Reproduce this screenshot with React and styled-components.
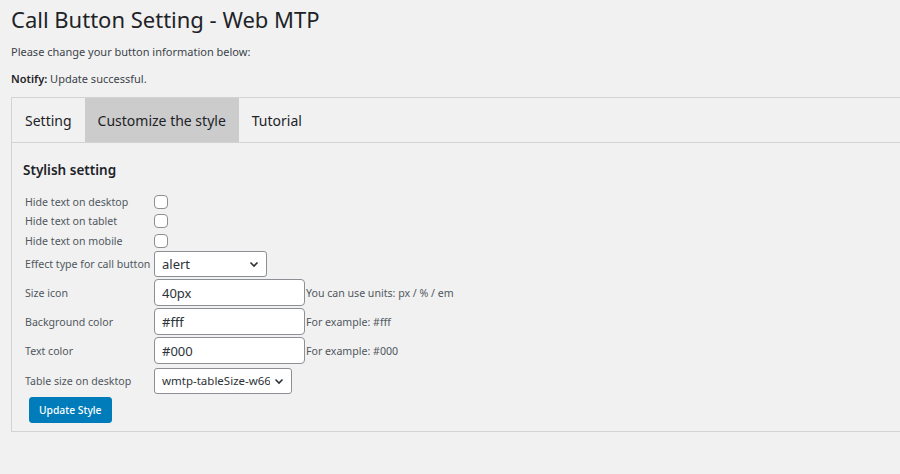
import React, { useState } from 'react';
import styled, { createGlobalStyle } from 'styled-components';

const GlobalStyle = createGlobalStyle`
  html, body {
    margin: 0;
    padding: 0;
    background: #f1f1f1;
    font-family: "Noto Sans", "Open Sans", sans-serif;
    color: #3c434a;
    font-size: 13px;
  }
  * { box-sizing: border-box; }
`;

const Wrap = styled.div`
  padding: 5px 0 0 11px;
  overflow: hidden;
`;

const Title = styled.h1`
  margin: 0;
  font-size: 22px;
  font-weight: 400;
  line-height: 29px;
  color: #1d2327;
`;

const Intro = styled.p`
  margin: 9px 0 0;
  font-size: 11px;
  line-height: 17px;
  & + & { margin-top: 10px; }
  & b { font-weight: 600; color: #1d2327; }
`;

const Panel = styled.div`
  margin-top: 10px;
  margin-right: -20px;
  border: 1px solid #d3d3d3;
`;

const TabBar = styled.div`
  display: flex;
  height: 45px;
  border-bottom: 1px solid #d3d3d3;
`;

const Tab = styled.button`
  border: 0;
  margin: 0;
  padding: 0 13px;
  font: inherit;
  font-size: 14px;
  color: #1d2327;
  background: ${p => (p.$active ? '#cccccc' : 'transparent')};
  cursor: pointer;
`;

const Body = styled.div`
  padding: 17px 0 8px 11px;
`;

const Heading = styled.h2`
  margin: 0 0 12px;
  font-size: 13.5px;
  font-weight: 600;
  line-height: 20px;
  color: #1d2327;
`;

const Rows = styled.div`
  display: flex;
  flex-direction: column;
  padding-left: 2px;
`;

const Row = styled.div`
  display: flex;
  align-items: center;
  height: ${p => p.$h || 29}px;
`;

const Label = styled.label`
  width: 129px;
  font-size: 10.6px;
  color: #50575e;
  white-space: nowrap;
`;

const Check = styled.input.attrs({ type: 'checkbox' })`
  appearance: none;
  margin: 0;
  width: 14px;
  height: 14px;
  border: 1px solid #8c8f94;
  border-radius: 4px;
  background: #fff;
`;

const Field = styled.input`
  width: 151px;
  height: 27px;
  margin: 0 1px 0 0;
  padding: 0 7px;
  border: 1px solid #8c8f94;
  border-radius: 4px;
  background: #fff;
  font: inherit;
  font-size: 13px;
  color: #2c3338;
`;

const SelectBox = styled.div`
  display: flex;
  align-items: center;
  gap: 4px;
  width: ${p => p.$w}px;
  height: 26px;
  padding: 0 7px 0 7px;
  border: 1px solid #8c8f94;
  border-radius: 3px;
  background: #fff;
  color: #2c3338;
  white-space: nowrap;
`;

const SelectText = styled.span`
  flex: 1;
  overflow: hidden;
  font-size: ${p => p.$size || 13}px;
`;

const Help = styled.span`
  font-size: 10.6px;
  color: #50575e;
`;

const Button = styled.button`
  margin: 1px 0 0 4px;
  height: 26px;
  padding: 0 9px;
  border: 1px solid #007cba;
  border-radius: 3px;
  background: #007cba;
  color: #fff;
  font: inherit;
  font-size: 10.3px;
  font-weight: 500;
  align-self: flex-start;
`;

const Chevron = () => (
  <svg width="10" height="10" viewBox="0 0 10 10" fill="none" stroke="#2c3338" strokeWidth="1.6">
    <path d="M1.5 3.5 5 7 8.5 3.5" />
  </svg>
);

export default function App() {
  const [tab, setTab] = useState(1);
  const tabs = ['Setting', 'Customize the style', 'Tutorial'];
  return (
    <>
      <GlobalStyle />
      <Wrap>
        <Title>Call Button Setting - Web MTP</Title>
        <Intro>Please change your button information below:</Intro>
        <Intro><b>Notify:</b> Update successful.</Intro>
        <Panel>
          <TabBar>
            {tabs.map((t, i) => (
              <Tab key={t} $active={tab === i} onClick={() => setTab(i)}>{t}</Tab>
            ))}
          </TabBar>
          <Body>
            <Heading>Stylish setting</Heading>
            <Rows>
              <Row $h={19.5}><Label>Hide text on desktop</Label><Check /></Row>
              <Row $h={19.5}><Label>Hide text on tablet</Label><Check /></Row>
              <Row $h={19.5}><Label>Hide text on mobile</Label><Check /></Row>
              <Row $h={27.5}>
                <Label>Effect type for call button</Label>
                <SelectBox $w={113}><SelectText>alert</SelectText><Chevron /></SelectBox>
              </Row>
              <Row>
                <Label>Size icon</Label>
                <Field defaultValue="40px" />
                <Help>You can use units: px / % / em</Help>
              </Row>
              <Row>
                <Label>Background color</Label>
                <Field defaultValue="#fff" />
                <Help>For example: #fff</Help>
              </Row>
              <Row>
                <Label>Text color</Label>
                <Field defaultValue="#000" />
                <Help>For example: #000</Help>
              </Row>
              <Row $h={31}>
                <Label>Table size on desktop</Label>
                <SelectBox $w={138}><SelectText $size={11.5}>wmtp-tableSize-w66</SelectText><Chevron /></SelectBox>
              </Row>
              <Button>Update Style</Button>
            </Rows>
          </Body>
        </Panel>
      </Wrap>
    </>
  );
}
